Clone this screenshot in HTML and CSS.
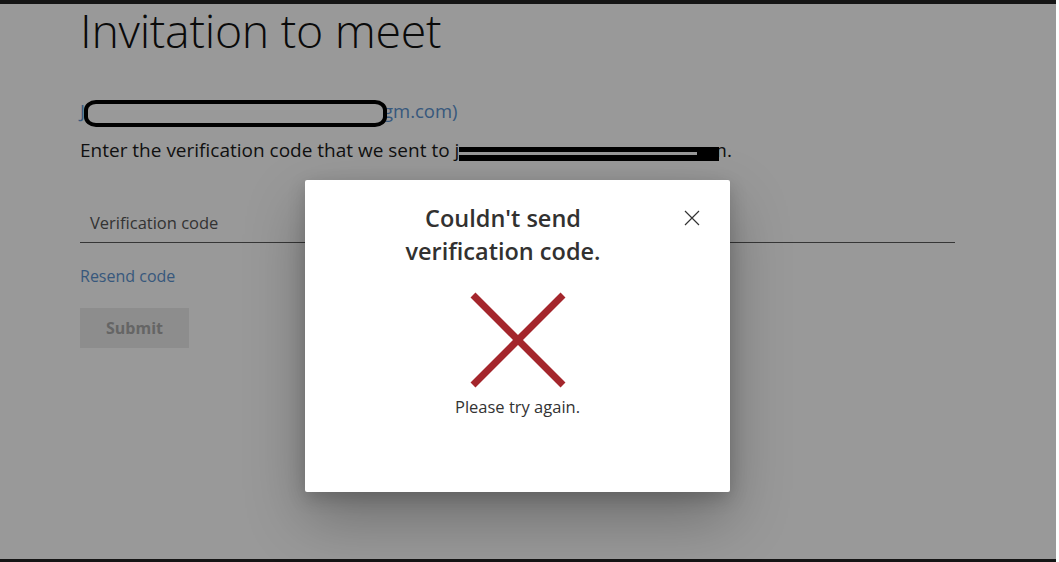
FILE: index.html
```html
<!DOCTYPE html>
<html lang="en">
<head>
<meta charset="utf-8">
<title>Invitation to meet</title>
<link rel="stylesheet" href="styles.css">
</head>
<body>
<div class="frame">
  <main class="page">
    <h1 class="title">Invitation to meet</h1>
    <p class="email">J<span class="redact-a"></span>gm.com)</p>
    <p class="info">Enter the verification code that we sent to j<span class="redact-b"><span class="redact-b-line"></span></span>m.</p>
    <div class="field"><span class="placeholder">Verification code</span></div>
    <a class="resend" href="#">Resend code</a>
    <button class="submit" type="button">Submit</button>
  </main>
  <div class="overlay">
    <div class="modal">
      <div class="modal-head">
        <h2 class="modal-title">Couldn't send<br>verification code.</h2>
        <button class="close" type="button" aria-label="Close">
          <svg width="16" height="16" viewBox="0 0 16 16"><path d="M1 1 L15 15 M15 1 L1 15" stroke="#333" stroke-width="1.2" fill="none"/></svg>
        </button>
      </div>
      <div class="modal-icon">
        <svg width="96" height="96" viewBox="0 0 96 96"><path d="M3 3 L93 93 M93 3 L3 93" stroke="#a4262c" stroke-width="7" fill="none"/></svg>
      </div>
      <p class="modal-text">Please try again.</p>
    </div>
  </div>
</div>
</body>
</html>
```
FILE: styles.css
```css
* { box-sizing: border-box; }
html, body { margin: 0; padding: 0; }
body {
  width: 1059px;
  height: 562px;
  overflow: hidden;
  background: #fff;
  font-family: "Open Sans", "Noto Sans", sans-serif;
}
.frame {
  position: relative;
  width: 1056px;
  height: 562px;
  border-top: 4px solid #151515;
  border-bottom: 3px solid #151515;
  background: #fff;
}
.page {
  padding: 0 0 0 80px;
  display: flex;
  flex-direction: column;
  align-items: flex-start;
}
.title {
  margin: 0;
  font-weight: 300;
  font-size: 46.5px;
  line-height: 52px;
  color: #111;
  letter-spacing: -0.3px;
}
.email {
  margin: 41px 0 0;
  font-size: 18.5px;
  line-height: 28px;
  color: #5c93d0;
  display: flex;
  align-items: center;
}
.redact-a {
  display: inline-block;
  width: 303px;
  height: 27px;
  margin-left: -1px;
  margin-right: -4px;
  background: #fff;
  border: 4px solid #000;
  border-radius: 12px / 10px;
  position: relative;
  top: 2px;
}
.info {
  margin: 11px 0 0;
  font-size: 19px;
  line-height: 28px;
  color: #1b1b1b;
  display: flex;
  align-items: center;
}
.redact-b {
  display: inline-block;
  width: 260px;
  height: 14px;
  margin-left: 0;
  margin-right: -10px;
  background: #000;
  position: relative;
  top: 4px;
  padding-top: 5px;
}
.redact-b-line {
  display: block;
  width: 238px;
  height: 3px;
  background: #fff;
}
.field {
  margin-top: 37px;
  width: 875px;
  height: 42px;
  border-bottom: 1px solid #5a5a5a;
  padding: 10px 0 0 10px;
}
.placeholder {
  display: block;
  font-size: 16.5px;
  line-height: 24px;
  color: #555;
}
.resend {
  margin-top: 21px;
  font-size: 16px;
  line-height: 24px;
  color: #5c93d0;
  text-decoration: none;
}
.submit {
  margin-top: 20px;
  width: 109px;
  height: 40px;
  border: none;
  background: #ececec;
  color: #a8a8a8;
  font-family: inherit;
  font-size: 16px;
  font-weight: 700;
  padding: 0;
}
.overlay {
  position: absolute;
  inset: 0;
  background: rgba(0, 0, 0, 0.4);
  padding: 176px 0 0 305px;
}
.modal {
  width: 425px;
  height: 312px;
  background: #fff;
  border-radius: 2px;
  box-shadow: 0 26px 60px rgba(0, 0, 0, 0.28), 0 6px 18px rgba(0, 0, 0, 0.18);
  padding: 22px 24px 0;
  display: flex;
  flex-direction: column;
  align-items: center;
}
.modal-head {
  width: 100%;
  display: flex;
  align-items: flex-start;
}
.modal-title {
  flex: 1;
  margin: 0;
  text-align: center;
  font-size: 23.5px;
  font-weight: 600;
  line-height: 33px;
  color: #323130;
}
.close {
  width: 29px;
  height: 29px;
  border: none;
  background: none;
  padding: 0;
  margin-top: 1px;
  display: flex;
  align-items: center;
  justify-content: center;
}
.modal-icon {
  margin-top: 24px;
  width: 96px;
  height: 96px;
}
.modal-icon svg { display: block; }
.modal-text {
  margin: 7px 0 0;
  font-size: 16.5px;
  line-height: 24px;
  color: #333;
}
```
